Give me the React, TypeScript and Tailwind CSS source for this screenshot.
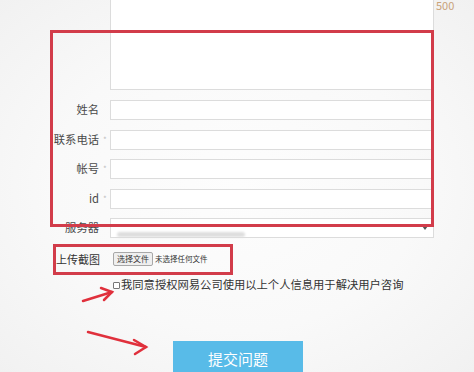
import React from "react";

const font = { fontFamily: '"Noto Sans CJK SC", "Noto Sans", sans-serif' };

function Row({ label, star, select }: { label: string; star?: boolean; select?: boolean }) {
  return (
    <div className="flex items-center h-[20px]">
      <div className="w-[100px] text-right text-[11.3px] leading-none text-[#4a4a4a] pr-[1px]">{label}</div>
      <div className="w-[10px] text-[8px] text-[#c0c0c0] leading-none pl-[3px]">{star ? "*" : ""}</div>
      <div className="relative w-[324px] h-[20px] bg-white border border-[#dcdcdc]">
        {select && (
          <>
            <div className="absolute left-[6px] bottom-[0px] w-[128px] h-[5px] bg-[#dedede] rounded-sm blur-[1px]" />
            <div className="absolute right-[5px] top-[7px] w-0 h-0 border-l-[3px] border-r-[3px] border-t-[4px] border-l-transparent border-r-transparent border-t-[#555]" />
          </>
        )}
      </div>
    </div>
  );
}

export default function App() {
  return (
    <div
      className="relative w-[474px] h-[372px] overflow-hidden bg-[radial-gradient(ellipse_at_center,#fdfdfd_0%,#f9f9f9_55%,#f1f1f1_100%)]"
      style={font}
    >
      <div className="flex flex-col">
        {/* textarea */}
        <div className="flex">
          <div className="w-[110px]" />
          <div className="w-[324px] h-[90px] bg-white border-x border-b border-[#dcdcdc]" />
          <div className="ml-[2px] mt-0 text-[11px] leading-none text-[#c9a27a]">500</div>
        </div>
        <div className="flex flex-col gap-[9.5px] mt-[10px]">
          <Row label="姓名" />
          <Row label="联系电话" star />
          <Row label="帐号" star />
          <Row label="id" star />
          <Row label="服务器" star select />
        </div>
        {/* upload */}
        <div className="flex items-center mt-[13px] h-[16px]">
          <div className="w-[56px]" />
          <div className="text-[11px] leading-none text-[#333]">上传截图</div>
          <div className="ml-[13px] h-[14px] px-[3px] flex items-center border border-[#a8a8a8] rounded-[2px] bg-[#efefef] text-[8px] leading-none text-[#333]">
            选择文件
          </div>
          <div className="ml-[2px] text-[7.5px] leading-none text-[#333]">未选择任何文件</div>
        </div>
        {/* agree */}
        <div className="flex items-center mt-[12px] h-[12px]">
          <div className="w-[113px]" />
          <div className="w-[7px] h-[7px] border border-[#777] rounded-[1px] bg-white" />
          <div className="ml-[1px] text-[11.3px] leading-none text-[#333]">我同意授权网易公司使用以上个人信息用于解决用户咨询</div>
        </div>
        {/* submit */}
        <div className="flex mt-[50px]">
          <div className="w-[173px]" />
          <button className="w-[130px] h-[36px] bg-[#58bbe8] text-white text-[15px] leading-none pb-[2px]">提交问题</button>
        </div>
      </div>

      {/* annotations */}
      <div className="absolute left-[50px] top-[30px] w-[384px] h-[197px] border-[3px] border-[#d23c4a]" />
      <div className="absolute left-[53px] top-[244px] w-[180px] h-[31px] border-[3px] border-[#d23c4a]" />
      <svg className="absolute left-0 top-0" width="474" height="372" viewBox="0 0 474 372">
        <g stroke="#e0303c" strokeWidth="2.5" strokeLinecap="round" fill="none">
          <line x1="83" y1="301" x2="112" y2="292" />
          <polyline points="101,288 112,292 104,300" />
          <line x1="88" y1="332" x2="146" y2="347" />
          <polyline points="134,340 146,347 135,354" />
        </g>
      </svg>
    </div>
  );
}
